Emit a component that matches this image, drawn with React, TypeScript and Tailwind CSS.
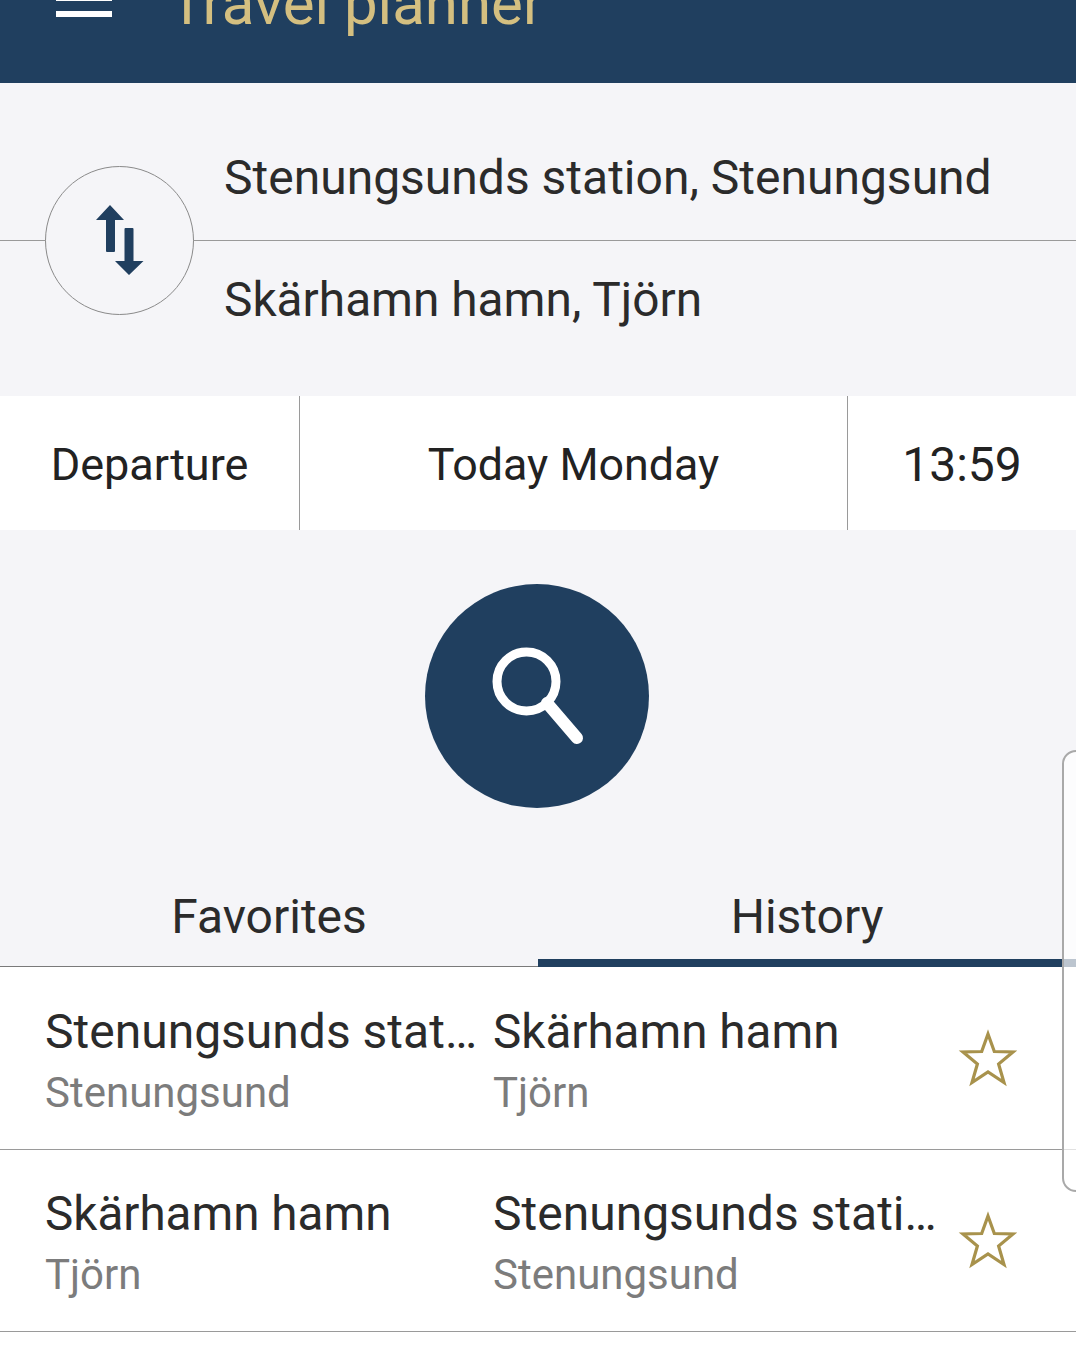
import React from 'react';

const font = { fontFamily: 'Roboto, sans-serif' };

const Place = ({ name, area, wide }: { name: string; area: string; wide?: boolean }) => (
  <>
    <div className={`truncate leading-[60px] text-[#2b2b2b] ${wide ? 'text-[48px]' : 'text-[47.6px]'}`}>{name}</div>
    <div className="mt-[2px] truncate text-[42px] leading-[58px] text-[#7c7c7c]">{area}</div>
  </>
);

const Trip = ({ children }: { children: React.ReactNode }) => (
  <div className="flex h-[182px] items-center border-b border-[#9a9a9a] pl-[45px] pr-[58px]">
    {children}
    <svg width="60" height="60" viewBox="0 0 60 60" className="-mt-[2px] shrink-0" fill="none">
      <path d="M30 6 L36.3 23.5 L55 24 L40.6 36 L46 54.5 L30 44 L14 54.5 L19.4 36 L5 24 L23.7 23.5 Z" stroke="#a8924c" strokeWidth="3.2" />
    </svg>
  </div>
);

export default function App() {
  return (
    <div className="relative h-[1350px] w-[1076px] overflow-hidden bg-white" style={font}>
      <header className="flex h-[83px] items-end overflow-hidden bg-[#203f5f] pl-[56px]">
        <div className="mb-[66px] flex w-[56px] shrink-0 flex-col gap-[10px]">
          <div className="h-[5px] bg-white" />
          <div className="h-[6px] bg-white" />
        </div>
        <div className="mb-[46px] ml-[57px] whitespace-nowrap text-[60px] leading-[66px] text-[#d4bf80]">Travel planner</div>
      </header>

      <section className="relative flex h-[313px] flex-col bg-[#f5f5f8]">
        <div className="flex h-[158px] items-end border-b border-[#9a9a9a] pl-[224px] pb-[32px] text-[48px] leading-[60px] text-[#2b2b2b]">
          Stenungsunds station, Stenungsund
        </div>
        <div className="pl-[224px] pt-[29px] text-[47.8px] leading-[60px] text-[#2b2b2b]">Skärhamn hamn, Tjörn</div>
        <button className="absolute left-[45px] top-[83px] flex h-[149px] w-[149px] items-center justify-center rounded-full border-[1.5px] border-[#8a8a8a] bg-[#f5f5f8]">
          <svg width="48" height="70" viewBox="0 0 48 70" fill="#203f5f" className="-mt-[2px]">
            <path d="M14 0 L28 15 H19 V46 Q19 47 18 47 H11 Q10 47 10 46 V15 H0 Z" />
            <path d="M33 70 L19 56 H28.5 V24 Q28.5 23 29.5 23 H36.5 Q37.5 23 37.5 24 V56 H47.5 Z" />
          </svg>
        </button>
      </section>

      <section className="flex h-[134px] bg-white text-[#222222]">
        <div className="flex w-[300px] items-center justify-center border-r border-[#9a9a9a] pt-[4px] text-[45px]">Departure</div>
        <div className="flex w-[548px] items-center justify-center border-r border-[#9a9a9a] pt-[4px] text-[44.8px]">Today Monday</div>
        <div className="flex flex-1 items-center justify-center pt-[4px] text-[48px]">13:59</div>
      </section>

      <section className="flex h-[437px] flex-col bg-[#f5f5f8]">
        <div className="flex flex-1 items-start justify-center pr-[2px] pt-[54px]">
          <button className="h-[224px] w-[224px] rounded-full bg-[#203f5f]">
            <svg width="224" height="224" viewBox="0 0 224 224" fill="none" stroke="white">
              <circle cx="101.5" cy="97.5" r="29.5" strokeWidth="9" />
              <path d="M122 119 L152 154" strokeWidth="12" strokeLinecap="round" />
            </svg>
          </button>
        </div>
        <div className="flex h-[102px] border-b border-[#7a7a7a] pt-[3px] text-[48px] text-[#2b2b2b]">
          <div className="flex w-[538px] items-center justify-center">Favorites</div>
          <div className="-mb-px flex flex-1 items-center justify-center border-b-[8px] border-[#203f5f] pt-[6px]">History</div>
        </div>
      </section>

      <div className="pt-px">
        <Trip>
          <div className="w-[448px] shrink-0 pr-4 pt-[6px]"><Place name="Stenungsunds station" area="Stenungsund" wide /></div>
          <div className="min-w-0 flex-1 pr-4 pt-[6px]"><Place name="Skärhamn hamn" area="Tjörn" /></div>
        </Trip>
        <Trip>
          <div className="w-[448px] shrink-0 pr-4 pt-[6px]"><Place name="Skärhamn hamn" area="Tjörn" /></div>
          <div className="min-w-0 flex-1 pr-4 pt-[6px]"><Place name="Stenungsunds station" area="Stenungsund" wide /></div>
        </Trip>
      </div>

      <div className="absolute left-[1062px] top-[750px] h-[442px] w-[30px] rounded-l-[14px] border-2 border-[#a9a9a9] bg-white/70" />
    </div>
  );
}
